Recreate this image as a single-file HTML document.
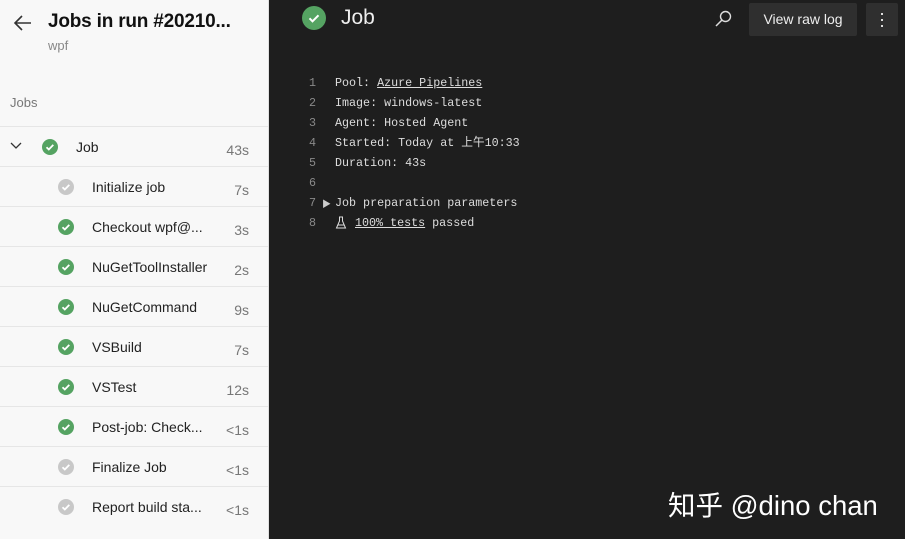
<!DOCTYPE html>
<html><head><meta charset="utf-8"><style>
*{margin:0;padding:0;box-sizing:border-box}
body{width:905px;height:539px;overflow:hidden;background:#1e1e1e;font-family:"Liberation Sans","Noto Sans CJK SC",sans-serif;position:relative}
.left{position:absolute;left:0;top:0;width:269px;height:539px;background:#f8f8f8;border-right:1px solid #e0e0e0}
.a{position:absolute;white-space:nowrap}
.row{position:absolute;left:0;width:268px;height:40px;border-top:1px solid #e6e6e6}
.ic{position:absolute;width:16px;height:16px;border-radius:50%}
.g{background:#55a362}.gr{background:#c8c8c8}
.ic svg{position:absolute;left:0;top:0}
.nm{position:absolute;font-size:14px;color:#222;top:12px}
.du{position:absolute;right:19px;font-size:14px;color:#777;top:15px}
.mono{font-family:"Liberation Mono","Noto Sans CJK SC",monospace;font-size:11.7px;line-height:14px;height:14px;color:#ddd}
.ln{position:absolute;left:300px;width:16px;text-align:right;font-family:"Liberation Mono",monospace;font-size:11.7px;line-height:14px;color:#8a8a8a}
.tx{position:absolute;left:335px}
u{text-decoration:underline}
</style></head><body>
<div class="left">
  <svg class="a" style="left:13px;top:14px" width="20" height="18" viewBox="0 0 20 18"><path d="M18 9H2M9 2L2 9l7 7" stroke="#333" stroke-width="1.6" fill="none"/></svg>
  <div class="a" style="left:48px;top:11px;font-size:19px;font-weight:bold;color:#111;letter-spacing:-0.2px">Jobs in run #20210...</div>
  <div class="a" style="left:48px;top:38px;font-size:13px;color:#888">wpf</div>
  <div class="a" style="left:10px;top:95px;font-size:13px;color:#777">Jobs</div>
  <div class="row" style="top:126px">
    <svg class="a" style="left:10px;top:15px" width="12" height="8" viewBox="0 0 12 8"><path d="M1 1l5 5 5-5" stroke="#333" stroke-width="1.3" fill="none"/></svg>
    <div class="ic g" style="left:42px;top:12px"><svg width="16" height="16"><path d="M4.5 8.2l2.3 2.3 4.5-4.6" stroke="#fff" stroke-width="1.8" fill="none"/></svg></div>
    <div class="nm" style="left:76px">Job</div><div class="du">43s</div>
  </div>
  <div class="row" style="top:166px"><div class="ic gr" style="left:58px;top:12px"><svg width="16" height="16"><path d="M4.5 8.2l2.3 2.3 4.5-4.6" stroke="#fff" stroke-width="1.8" fill="none"/></svg></div><div class="nm" style="left:92px">Initialize job</div><div class="du">7s</div></div>
  <div class="row" style="top:206px"><div class="ic g" style="left:58px;top:12px"><svg width="16" height="16"><path d="M4.5 8.2l2.3 2.3 4.5-4.6" stroke="#fff" stroke-width="1.8" fill="none"/></svg></div><div class="nm" style="left:92px">Checkout wpf@...</div><div class="du">3s</div></div>
  <div class="row" style="top:246px"><div class="ic g" style="left:58px;top:12px"><svg width="16" height="16"><path d="M4.5 8.2l2.3 2.3 4.5-4.6" stroke="#fff" stroke-width="1.8" fill="none"/></svg></div><div class="nm" style="left:92px">NuGetToolInstaller</div><div class="du">2s</div></div>
  <div class="row" style="top:286px"><div class="ic g" style="left:58px;top:12px"><svg width="16" height="16"><path d="M4.5 8.2l2.3 2.3 4.5-4.6" stroke="#fff" stroke-width="1.8" fill="none"/></svg></div><div class="nm" style="left:92px">NuGetCommand</div><div class="du">9s</div></div>
  <div class="row" style="top:326px"><div class="ic g" style="left:58px;top:12px"><svg width="16" height="16"><path d="M4.5 8.2l2.3 2.3 4.5-4.6" stroke="#fff" stroke-width="1.8" fill="none"/></svg></div><div class="nm" style="left:92px">VSBuild</div><div class="du">7s</div></div>
  <div class="row" style="top:366px"><div class="ic g" style="left:58px;top:12px"><svg width="16" height="16"><path d="M4.5 8.2l2.3 2.3 4.5-4.6" stroke="#fff" stroke-width="1.8" fill="none"/></svg></div><div class="nm" style="left:92px">VSTest</div><div class="du">12s</div></div>
  <div class="row" style="top:406px"><div class="ic g" style="left:58px;top:12px"><svg width="16" height="16"><path d="M4.5 8.2l2.3 2.3 4.5-4.6" stroke="#fff" stroke-width="1.8" fill="none"/></svg></div><div class="nm" style="left:92px">Post-job: Check...</div><div class="du">&lt;1s</div></div>
  <div class="row" style="top:446px"><div class="ic gr" style="left:58px;top:12px"><svg width="16" height="16"><path d="M4.5 8.2l2.3 2.3 4.5-4.6" stroke="#fff" stroke-width="1.8" fill="none"/></svg></div><div class="nm" style="left:92px">Finalize Job</div><div class="du">&lt;1s</div></div>
  <div class="row" style="top:486px"><div class="ic gr" style="left:58px;top:12px"><svg width="16" height="16"><path d="M4.5 8.2l2.3 2.3 4.5-4.6" stroke="#fff" stroke-width="1.8" fill="none"/></svg></div><div class="nm" style="left:92px">Report build sta...</div><div class="du">&lt;1s</div></div>
</div>

<div class="ic g" style="left:302px;top:6px;width:24px;height:24px"><svg width="24" height="24"><path d="M7.5 12.3l3 3 6-6" stroke="#fff" stroke-width="2" fill="none"/></svg></div>
<div class="a" style="left:341px;top:6px;font-size:21px;color:#eee">Job</div>
<svg class="a" style="left:714px;top:9px" width="20" height="20" viewBox="0 0 20 20"><circle cx="11.5" cy="7.5" r="5" stroke="#ddd" stroke-width="1.4" fill="none"/><path d="M8 11l-6 6" stroke="#ddd" stroke-width="1.5"/></svg>
<div class="a" style="left:749px;top:3px;width:108px;height:33px;background:#2f2f2f;border-radius:2px;color:#eee;font-size:14px;line-height:33px;text-align:center">View raw log</div>
<div class="a" style="left:866px;top:3px;width:32px;height:33px;background:#2f2f2f;border-radius:2px"><div class="a" style="left:15px;top:10px;width:2px;height:2px;background:#ddd"></div><div class="a" style="left:15px;top:16px;width:2px;height:2px;background:#ddd"></div><div class="a" style="left:15px;top:22px;width:2px;height:2px;background:#ddd"></div></div>

<div class="ln" style="top:76px">1</div><div class="a mono tx" style="top:76px">Pool: <u>Azure Pipelines</u></div>
<div class="ln" style="top:96px">2</div><div class="a mono tx" style="top:96px">Image: windows-latest</div>
<div class="ln" style="top:116px">3</div><div class="a mono tx" style="top:116px">Agent: Hosted Agent</div>
<div class="ln" style="top:136px">4</div><div class="a mono tx" style="top:136px">Started: Today at 上午10:33</div>
<div class="ln" style="top:156px">5</div><div class="a mono tx" style="top:156px">Duration: 43s</div>
<div class="ln" style="top:176px">6</div>
<div class="ln" style="top:196px">7</div><div class="a" style="left:322px;top:197px;font-size:9px;color:#ccc">▶</div><div class="a mono tx" style="top:196px">Job preparation parameters</div>
<div class="ln" style="top:216px">8</div>
<svg class="a" style="left:335px;top:216px" width="12" height="13" viewBox="0 0 12 13"><path d="M4 1h4M4.5 1v4L1.5 12h9L7.5 5V1M3 9h6" stroke="#ddd" stroke-width="1" fill="none"/></svg>
<div class="a mono" style="left:355px;top:216px"><u>100% tests</u> passed</div>

<div class="a" style="left:668px;top:483px;font-size:27.5px;color:#fff;font-family:'Liberation Sans','Noto Sans CJK SC',sans-serif">知乎 @dino chan</div>
</body></html>
